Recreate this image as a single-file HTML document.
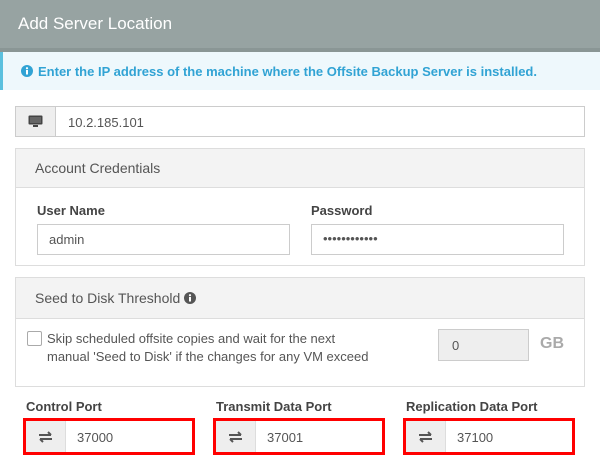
<!DOCTYPE html>
<html><head><style>
*{box-sizing:border-box;margin:0;padding:0}
body{width:600px;height:469px;background:#fff;font-family:"Liberation Sans",sans-serif;color:#555;position:relative;overflow:hidden}
.a{position:absolute}
.hdr{left:0;top:0;width:600px;height:52px;background:#97a3a2;border-bottom:4px solid #8a9695}
.hdr span{position:absolute;left:18px;top:14px;font-size:17px;color:#fff}
.info{left:0;top:52px;width:600px;height:38px;background:#eef8fc;border-left:3px solid #5bc0de}
.info span{position:absolute;left:18px;top:12px;font-size:13px;color:#31a3d4;font-weight:bold}
.inp{border:1px solid #ccc;background:#fff;font-size:13px;color:#555}
.add{background:#eee;border-right:1px solid #ccc;position:absolute;left:0;top:0;bottom:0}
.panel{border:1px solid #ddd;background:#fff}
.ph{position:absolute;left:0;top:0;right:0;background:#f3f3f3;border-bottom:1px solid #ddd;font-size:14px;color:#555;padding-left:19px}
.lbl{font-size:13px;font-weight:bold;color:#444}
.red{border:3px solid #f00}
</style></head><body>
<div class="a hdr"><span>Add Server Location</span></div>
<div class="a info"><span><svg width="12" height="12" viewBox="0 0 12 12" style="vertical-align:-1px;margin-right:5px"><circle cx="6" cy="6" r="6" fill="#31a3d4"/><rect x="5" y="5" width="2" height="4.5" fill="#fff"/><circle cx="6" cy="3.2" r="1.1" fill="#fff"/></svg>Enter the IP address of the machine where the Offsite Backup Server is installed.</span></div>

<div class="a inp" style="left:15px;top:106px;width:570px;height:31px">
 <div class="add" style="width:40px"><svg class="a" style="left:12px;top:8px" width="15" height="13" viewBox="0 0 15 13"><rect x="0.5" y="0.5" width="14" height="9" rx="1" fill="#444"/><rect x="2" y="2" width="11" height="6" fill="#666"/><rect x="5" y="10" width="5" height="2" fill="#444"/></svg></div>
 <span class="a" style="left:52px;top:8px">10.2.185.101</span></div>

<div class="a panel" style="left:15px;top:148px;width:570px;height:118px">
 <div class="ph" style="height:39px;line-height:39px">Account Credentials</div>
 <div class="a lbl" style="left:21px;top:54px">User Name</div>
 <div class="a lbl" style="left:295px;top:54px">Password</div>
 <div class="a inp" style="left:21px;top:75px;width:253px;height:31px"><span class="a" style="left:11px;top:7px">admin</span></div>
 <div class="a inp" style="left:295px;top:75px;width:253px;height:31px"><span class="a" style="left:11px;top:6px">••••••••••••</span></div>
</div>

<div class="a panel" style="left:15px;top:277px;width:570px;height:110px">
 <div class="ph" style="height:41px;line-height:41px">Seed to Disk Threshold <svg width="12" height="12" viewBox="0 0 12 12" style="vertical-align:-1px"><circle cx="6" cy="6" r="6" fill="#555"/><rect x="5" y="5" width="2" height="4.5" fill="#fff"/><circle cx="6" cy="3.2" r="1.1" fill="#fff"/></svg></div>
 <div class="a" style="left:11px;top:53px;width:15px;height:15px;border:1px solid #aaa;border-radius:2px"></div>
 <div class="a" style="left:31px;top:52px;font-size:13px;line-height:18px;color:#555">Skip scheduled offsite copies and wait for the next<br>manual 'Seed to Disk' if the changes for any VM exceed</div>
 <div class="a inp" style="left:422px;top:51px;width:91px;height:32px;background:#eee"><span class="a" style="left:13px;top:8px">0</span></div>
 <div class="a" style="left:524px;top:57px;font-size:16px;font-weight:bold;color:#aaa">GB</div>
</div>

<div class="a lbl" style="left:26px;top:399px">Control Port</div>
<div class="a lbl" style="left:216px;top:399px">Transmit Data Port</div>
<div class="a lbl" style="left:406px;top:399px">Replication Data Port</div>

<div class="a red" style="left:23px;top:418px;width:172px;height:37px"><div class="add" style="width:40px;border-right:1px solid #ddd"><svg class="a" style="left:12px;top:10px" width="15" height="12" viewBox="0 0 15 12"><path d="M1 4h12M10 1l3 3M14 8H2M5 11L2 8" stroke="#555" stroke-width="2" fill="none"/></svg></div><span class="a" style="left:51px;top:9px;font-size:13px">37000</span></div>
<div class="a red" style="left:213px;top:418px;width:172px;height:37px"><div class="add" style="width:40px;border-right:1px solid #ddd"><svg class="a" style="left:12px;top:10px" width="15" height="12" viewBox="0 0 15 12"><path d="M1 4h12M10 1l3 3M14 8H2M5 11L2 8" stroke="#555" stroke-width="2" fill="none"/></svg></div><span class="a" style="left:51px;top:9px;font-size:13px">37001</span></div>
<div class="a red" style="left:403px;top:418px;width:172px;height:37px"><div class="add" style="width:40px;border-right:1px solid #ddd"><svg class="a" style="left:12px;top:10px" width="15" height="12" viewBox="0 0 15 12"><path d="M1 4h12M10 1l3 3M14 8H2M5 11L2 8" stroke="#555" stroke-width="2" fill="none"/></svg></div><span class="a" style="left:51px;top:9px;font-size:13px">37100</span></div>
</body></html>
